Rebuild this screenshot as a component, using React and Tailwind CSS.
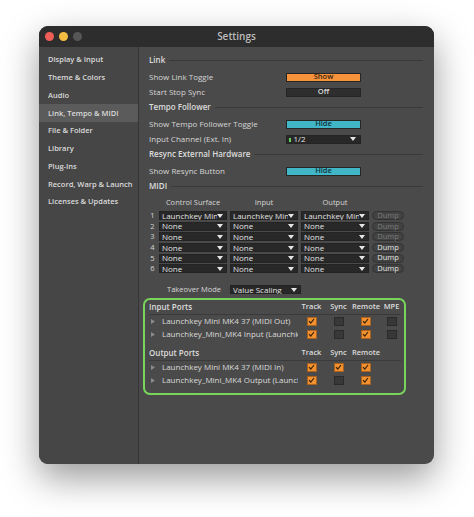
import React from 'react';

const font = { fontFamily: '"Open Sans", "Noto Sans", sans-serif' };

const sidebarItems = [
    'Display & Input',
    'Theme & Colors',
    'Audio',
    'Link, Tempo & MIDI',
    'File & Folder',
    'Library',
    'Plug-Ins',
    'Record, Warp & Launch',
    'Licenses & Updates',
];

const midiRows = [
    { n: 1, cs: 'Launchkey Mini MK4 37', input: 'Launchkey Mini MK4 37', output: 'Launchkey Mini MK4 37', dump: false },
    { n: 2, cs: 'None', input: 'None', output: 'None', dump: false },
    { n: 3, cs: 'None', input: 'None', output: 'None', dump: false },
    { n: 4, cs: 'None', input: 'None', output: 'None', dump: true },
    { n: 5, cs: 'None', input: 'None', output: 'None', dump: true },
    { n: 6, cs: 'None', input: 'None', output: 'None', dump: true },
];

const SectionHeader = ({ title }) => (
    <div className="flex items-center h-[15px] mb-[2px] gap-[4px]">
        <span className="text-[8px] font-semibold text-[#dcdcdc] whitespace-nowrap">{title}</span>
        <div className="flex-1 h-px bg-[#393939]" />
    </div>
);

const Row = ({ label, children }) => (
    <div className="flex items-center h-[15px]">
        <span className="w-[137px] text-[8px] font-medium text-[#d6d6d6] whitespace-nowrap">{label}</span>
        {children}
    </div>
);

const Toggle = ({ label, tone }) => {
    const tones = {
        orange: 'bg-[#f6923a] text-[#3a2410]',
        dark: 'bg-[#2e2e2e] text-[#d8d8d8]',
        teal: 'bg-[#41b6c6] text-[#12353a]',
    };
    return (
        <div className={`w-[75px] h-[9px] border border-[#262626] flex items-center justify-center text-[7.5px] font-semibold leading-none ${tones[tone]}`}>
            {label}
        </div>
    );
};

const Arrow = () => (
    <svg width="6" height="4" viewBox="0 0 6 4" className="shrink-0">
        <path d="M0 0 L6 0 L3 4 Z" fill="#e6e6e6" />
    </svg>
);

const Dropdown = ({ value, className = 'w-[68px]' }) => (
    <div className={`h-[9px] bg-[#282828] border border-[#232323] flex items-center pl-[2px] pr-[3px] ${className}`}>
        <span className="flex-1 min-w-0 overflow-hidden whitespace-nowrap text-[8px] font-medium leading-none text-[#e2e2e2]">{value}</span>
        <Arrow />
    </div>
);

const Checkbox = ({ checked }) => (
    <div
        className={`w-[10px] h-[9px] border flex items-center justify-center ${
            checked ? 'bg-[#f1912f] border-[#a8611f]' : 'bg-[#383838] border-[#2a2a2a]'
        }`}
    >
        {checked && (
            <svg width="7" height="6" viewBox="0 0 7 6">
                <path d="M1 3.2 L2.8 5 L6 1" stroke="#3a2008" strokeWidth="1.2" fill="none" />
            </svg>
        )}
    </div>
);

const PortRow = ({ name, checks }) => (
    <div className="grid grid-cols-[149px_27px_27px_27px_25px] h-[13px] items-center">
        <div className="flex items-center overflow-hidden whitespace-nowrap">
            <svg width="4" height="5" viewBox="0 0 4 5" className="ml-[2px] mr-[7px] shrink-0">
                <path d="M0 0 L4 2.5 L0 5 Z" fill="#8a8a8a" />
            </svg>
            <span className="text-[8px] font-medium text-[#dadada]">{name}</span>
        </div>
        {checks.map((c, i) => (
            <div key={i} className="flex justify-center">
                {c === null ? null : <Checkbox checked={c} />}
            </div>
        ))}
    </div>
);

const PortHeader = ({ title, cols }) => (
    <div className="grid grid-cols-[149px_27px_27px_27px_25px] h-[15px] items-center border-b border-[#3a3a3a] mr-[3px]">
        <span className="text-[8px] font-semibold text-[#dcdcdc]">{title}</span>
        {cols.map((c, i) => (
            <span key={i} className="text-[7.5px] font-semibold text-[#dcdcdc] text-center">{c}</span>
        ))}
    </div>
);

export default function App() {
    return (
        <div className="w-[474px] h-[517px] bg-white pt-[26px] pl-[39px]" style={font}>
            <div className="w-[395px] h-[438px] rounded-[9px] overflow-hidden bg-[#4a4a4a] shadow-[0_14px_36px_rgba(0,0,0,0.4)] flex flex-col">
                {/* Title bar */}
                <div className="h-[21px] bg-[#2d2d2d] relative flex items-center pl-[6px] gap-[5px]">
                    <div className="w-[9px] h-[9px] rounded-full bg-[#ee5d56]" />
                    <div className="w-[9px] h-[9px] rounded-full bg-[#f4be41]" />
                    <div className="w-[9px] h-[9px] rounded-full bg-[#565656]" />
                    <span className="absolute inset-0 flex items-center justify-center text-[10px] font-semibold text-[#bcbcbc]">
                        Settings
                    </span>
                </div>

                <div className="flex flex-1">
                    {/* Sidebar */}
                    <div className="w-[100px] bg-[#464646] border-r border-[#353535] pt-[4px]">
                        {sidebarItems.map((item) => (
                            <div
                                key={item}
                                className={`h-[17.75px] flex items-center pl-[9px] text-[7.5px] font-semibold whitespace-nowrap text-[#dadada] ${
                                    item === 'Link, Tempo & MIDI' ? 'bg-[#5b5b5b]' : ''
                                }`}
                            >
                                {item}
                            </div>
                        ))}
                    </div>

                    {/* Content */}
                    <div className="flex-1 pl-[10px] pr-[11px] pt-[5.5px]">
                        <SectionHeader title="Link" />
                        <Row label="Show Link Toggle"><Toggle label="Show" tone="orange" /></Row>
                        <Row label="Start Stop Sync"><Toggle label="Off" tone="dark" /></Row>

                        <SectionHeader title="Tempo Follower" />
                        <Row label="Show Tempo Follower Toggle"><Toggle label="Hide" tone="teal" /></Row>
                        <Row label="Input Channel (Ext. In)">
                            <div className="w-[75px] h-[9px] bg-[#282828] border border-[#232323] flex items-center pl-[2px] pr-[4px] gap-[3px]">
                                <div className="w-[1.5px] h-[4px] bg-[#5fd35a] mt-[2px]" />
                                <span className="flex-1 text-[8px] font-medium leading-none text-[#e2e2e2]">1/2</span>
                                <Arrow />
                            </div>
                        </Row>

                        <SectionHeader title="Resync External Hardware" />
                        <Row label="Show Resync Button"><Toggle label="Hide" tone="teal" /></Row>

                        <SectionHeader title="MIDI" />

                        {/* MIDI table */}
                        <div className="flex items-center h-[15px] text-[7.5px] font-medium text-[#d6d6d6]">
                            <span className="w-[10px]" />
                            <span className="w-[71px] text-center pr-[3px]">Control Surface</span>
                            <span className="w-[71px] text-center pr-[3px]">Input</span>
                            <span className="w-[71px] text-center pr-[3px]">Output</span>
                        </div>
                        {midiRows.map((r) => (
                            <div key={r.n} className="flex items-center h-[10.6px] gap-[3px]">
                                <span className="w-[7px] text-[7.5px] font-medium text-[#d6d6d6] text-center">{r.n}</span>
                                <Dropdown value={r.cs} />
                                <Dropdown value={r.input} />
                                <Dropdown value={r.output} />
                                <div
                                    className={`w-[32px] h-[9px] rounded-full border border-[#333] bg-[#424242] flex items-center justify-center text-[7.5px] font-medium leading-none ${
                                        r.dump ? 'text-[#e4e4e4]' : 'text-[#7a7a7a]'
                                    }`}
                                >
                                    Dump
                                </div>
                            </div>
                        ))}

                        <div className="flex items-center h-[10px] mt-[10.5px]">
                            <span className="w-[81px] text-right pr-[9px] text-[7.5px] font-medium text-[#d6d6d6] whitespace-nowrap">
                                Takeover Mode
                            </span>
                            <Dropdown value="Value Scaling" className="w-[71px]" />
                        </div>

                        {/* Ports */}
                        <div className="mt-[3px] -ml-[6px] w-[263px] border-2 border-[#79d45c] rounded-[7px] pl-[4px] pb-[6px]">
                            <PortHeader title="Input Ports" cols={['Track', 'Sync', 'Remote', 'MPE']} />
                            <PortRow name="Launchkey Mini MK4 37 (MIDI Out)" checks={[true, false, true, false]} />
                            <PortRow name="Launchkey_Mini_MK4 Input (Launchkey_Mini_MK4 Input)" checks={[true, false, true, false]} />
                            <div className="h-[5px]" />
                            <PortHeader title="Output Ports" cols={['Track', 'Sync', 'Remote', '']} />
                            <PortRow name="Launchkey Mini MK4 37 (MIDI In)" checks={[true, true, true, null]} />
                            <PortRow name="Launchkey_Mini_MK4 Output (Launchkey_Mini_MK4 Output)" checks={[true, false, true, null]} />
                        </div>
                    </div>
                </div>
            </div>
        </div>
    );
}
